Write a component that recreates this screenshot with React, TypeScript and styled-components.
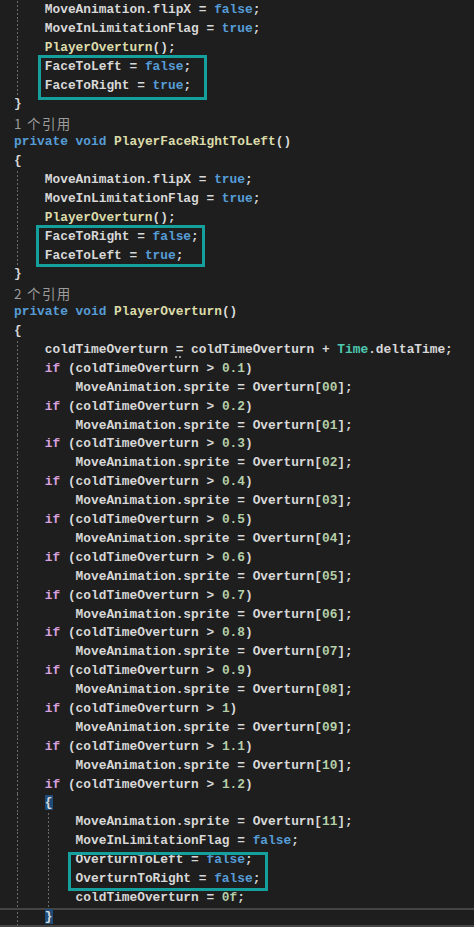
import React from 'react';
import styled, { createGlobalStyle } from 'styled-components';

type Kind = 'plain' | 'kw' | 'ctl' | 'num' | 'type' | 'fn' | 'match' | 'hint';
type Tok = [string, Kind?];

interface LineData {
  indent: number;
  guides?: number[];
  toks?: Tok[];
  lens?: string;
  current?: boolean;
}

interface BoxData {
  left: number;
  width: number;
  top: number;
  bottom: number;
  lines: LineData[];
}

type Row = LineData | BoxData;

const CHAR = 7.7;
const GUTTER = 14;

const GlobalStyle = createGlobalStyle`
  html, body {
    margin: 0;
    padding: 0;
    background: #1e1e1e;
  }
`;

const colors: Record<Kind, string> = {
  plain: '#d8d8d8',
  kw: '#569cd6',
  ctl: '#d8a0df',
  num: '#b5cea8',
  type: '#4ec9b0',
  fn: '#dcdcaa',
  match: '#d8d8d8',
  hint: '#d8d8d8',
};

const Editor = styled.div`
  width: 474px;
  height: 927px;
  overflow: hidden;
  background: #1e1e1e;
  padding-top: 1px;
  box-sizing: border-box;
  font-family: 'Liberation Mono', 'Noto Sans CJK SC', monospace;
  font-size: 12.83px;
  font-weight: bold;
  line-height: 18.9px;
  color: #d8d8d8;
`;

const guideBg = (cols: number[]) =>
  cols
    .map(() => 'repeating-linear-gradient(to bottom, #6a6a6a 0 2px, transparent 2px 4px)')
    .join(', ');

const Line = styled.div<{ $indent: number; $guides: number[]; $current?: boolean }>`
  height: 18.9px;
  white-space: pre;
  padding-left: ${(p) => GUTTER + p.$indent * 4 * CHAR}px;
  box-sizing: border-box;
  background-image: ${(p) => (p.$guides.length ? guideBg(p.$guides) : 'none')};
  background-size: 1px 100%;
  background-repeat: no-repeat;
  background-position: ${(p) =>
    p.$guides.map((c) => `${GUTTER + 3 + c * CHAR}px 0`).join(', ') || '0 0'};
  box-shadow: ${(p) => (p.$current ? 'inset 0 2px 0 #454545, inset 0 -2px 0 #454545' : 'none')};
`;

const Tk = styled.span<{ $kind: Kind }>`
  color: ${(p) => colors[p.$kind]};
  ${(p) => p.$kind === 'match' && 'background: #1f4c78;'}
  ${(p) =>
    p.$kind === 'hint' &&
    'text-decoration: underline dotted #9a9a9a; text-decoration-thickness: 2px; text-underline-offset: 3px;'}
`;

const Lens = styled.span`
  font-family: 'Noto Sans CJK SC', 'Liberation Sans', sans-serif;
  font-weight: normal;
  font-size: 13.5px;
  letter-spacing: 1.3px;
  color: #9b9b9b;
`;

const Marked = styled.div<{ $left: number; $width: number; $top: number; $bottom: number }>`
  position: relative;

  &::after {
    content: '';
    position: absolute;
    left: ${(p) => p.$left}px;
    width: ${(p) => p.$width}px;
    top: ${(p) => p.$top}px;
    bottom: ${(p) => p.$bottom}px;
    border: 3px solid #16a09d;
    box-sizing: border-box;
    pointer-events: none;
  }
`;

const L = (indent: number, guides: number[], toks: Tok[], current?: boolean): LineData => ({
  indent,
  guides,
  toks,
  current,
});

const ifLines: LineData[] = [];
['0.1', '0.2', '0.3', '0.4', '0.5', '0.6', '0.7', '0.8', '0.9', '1', '1.1'].forEach((v, i) => {
  ifLines.push(L(1, [0], [['if', 'ctl'], [' (coldTimeOverturn > '], [v, 'num'], [')']]));
  ifLines.push(
    L(2, [0], [['MoveAnimation.sprite = Overturn['], [String(i).padStart(2, '0'), 'num'], ['];']])
  );
});

const rows: Row[] = [
  L(1, [0], [['MoveAnimation.flipX = '], ['false', 'kw'], [';']]),
  L(1, [0], [['MoveInLimitationFlag = '], ['true', 'kw'], [';']]),
  L(1, [0], [['PlayerOverturn', 'fn'], ['();']]),
  {
    left: 38,
    width: 169,
    top: -3,
    bottom: -5,
    lines: [
      L(1, [0], [['FaceToLeft = '], ['false', 'kw'], [';']]),
      L(1, [0], [['FaceToRight = '], ['true', 'kw'], [';']]),
    ],
  },
  L(0, [], [['}']]),
  { indent: 0, lens: '1 个引用' },
  L(0, [], [['private', 'kw'], [' '], ['void', 'kw'], [' '], ['PlayerFaceRightToLeft', 'fn'], ['()']]),
  L(0, [], [['{']]),
  L(1, [0], [['MoveAnimation.flipX = '], ['true', 'kw'], [';']]),
  L(1, [0], [['MoveInLimitationFlag = '], ['true', 'kw'], [';']]),
  L(1, [0], [['PlayerOverturn', 'fn'], ['();']]),
  {
    left: 36,
    width: 169,
    top: -3,
    bottom: -2,
    lines: [
      L(1, [0], [['FaceToRight = '], ['false', 'kw'], [';']]),
      L(1, [0], [['FaceToLeft = '], ['true', 'kw'], [';']]),
    ],
  },
  L(0, [], [['}']]),
  { indent: 0, lens: '2 个引用' },
  L(0, [], [['private', 'kw'], [' '], ['void', 'kw'], [' '], ['PlayerOverturn', 'fn'], ['()']]),
  L(0, [], [['{']]),
  L(1, [0], [
    ['coldTimeOverturn '],
    ['=', 'hint'],
    [' coldTimeOverturn + '],
    ['Time', 'type'],
    ['.deltaTime;'],
  ]),
  ...ifLines,
  L(1, [0], [['if', 'ctl'], [' (coldTimeOverturn > '], ['1.2', 'num'], [')']]),
  L(1, [0], [['{', 'match']]),
  L(2, [0, 4], [['MoveAnimation.sprite = Overturn['], ['11', 'num'], ['];']]),
  L(2, [0, 4], [['MoveInLimitationFlag = '], ['false', 'kw'], [';']]),
  {
    left: 68,
    width: 200,
    top: 1,
    bottom: -2,
    lines: [
      L(2, [0, 4], [['OverturnToLeft = '], ['false', 'kw'], [';']]),
      L(2, [0, 4], [['OverturnToRight = '], ['false', 'kw'], [';']]),
    ],
  },
  L(2, [0, 4], [['coldTimeOverturn = '], ['0f', 'num'], [';']]),
  L(1, [0], [['}', 'match']], true),
];

const CodeLine: React.FC<{ line: LineData }> = ({ line }) => (
  <Line $indent={line.indent} $guides={line.guides ?? []} $current={line.current}>
    {line.lens ? (
      <Lens>{line.lens}</Lens>
    ) : (
      line.toks?.map(([text, kind], i) => (
        <Tk key={i} $kind={kind ?? 'plain'}>
          {text}
        </Tk>
      ))
    )}
  </Line>
);

const App: React.FC = () => (
  <>
    <GlobalStyle />
    <Editor>
      {rows.map((row, i) =>
        'lines' in row ? (
          <Marked key={i} $left={row.left} $width={row.width} $top={row.top} $bottom={row.bottom}>
            {row.lines.map((line, j) => (
              <CodeLine key={j} line={line} />
            ))}
          </Marked>
        ) : (
          <CodeLine key={i} line={row} />
        )
      )}
    </Editor>
  </>
);

export default App;
